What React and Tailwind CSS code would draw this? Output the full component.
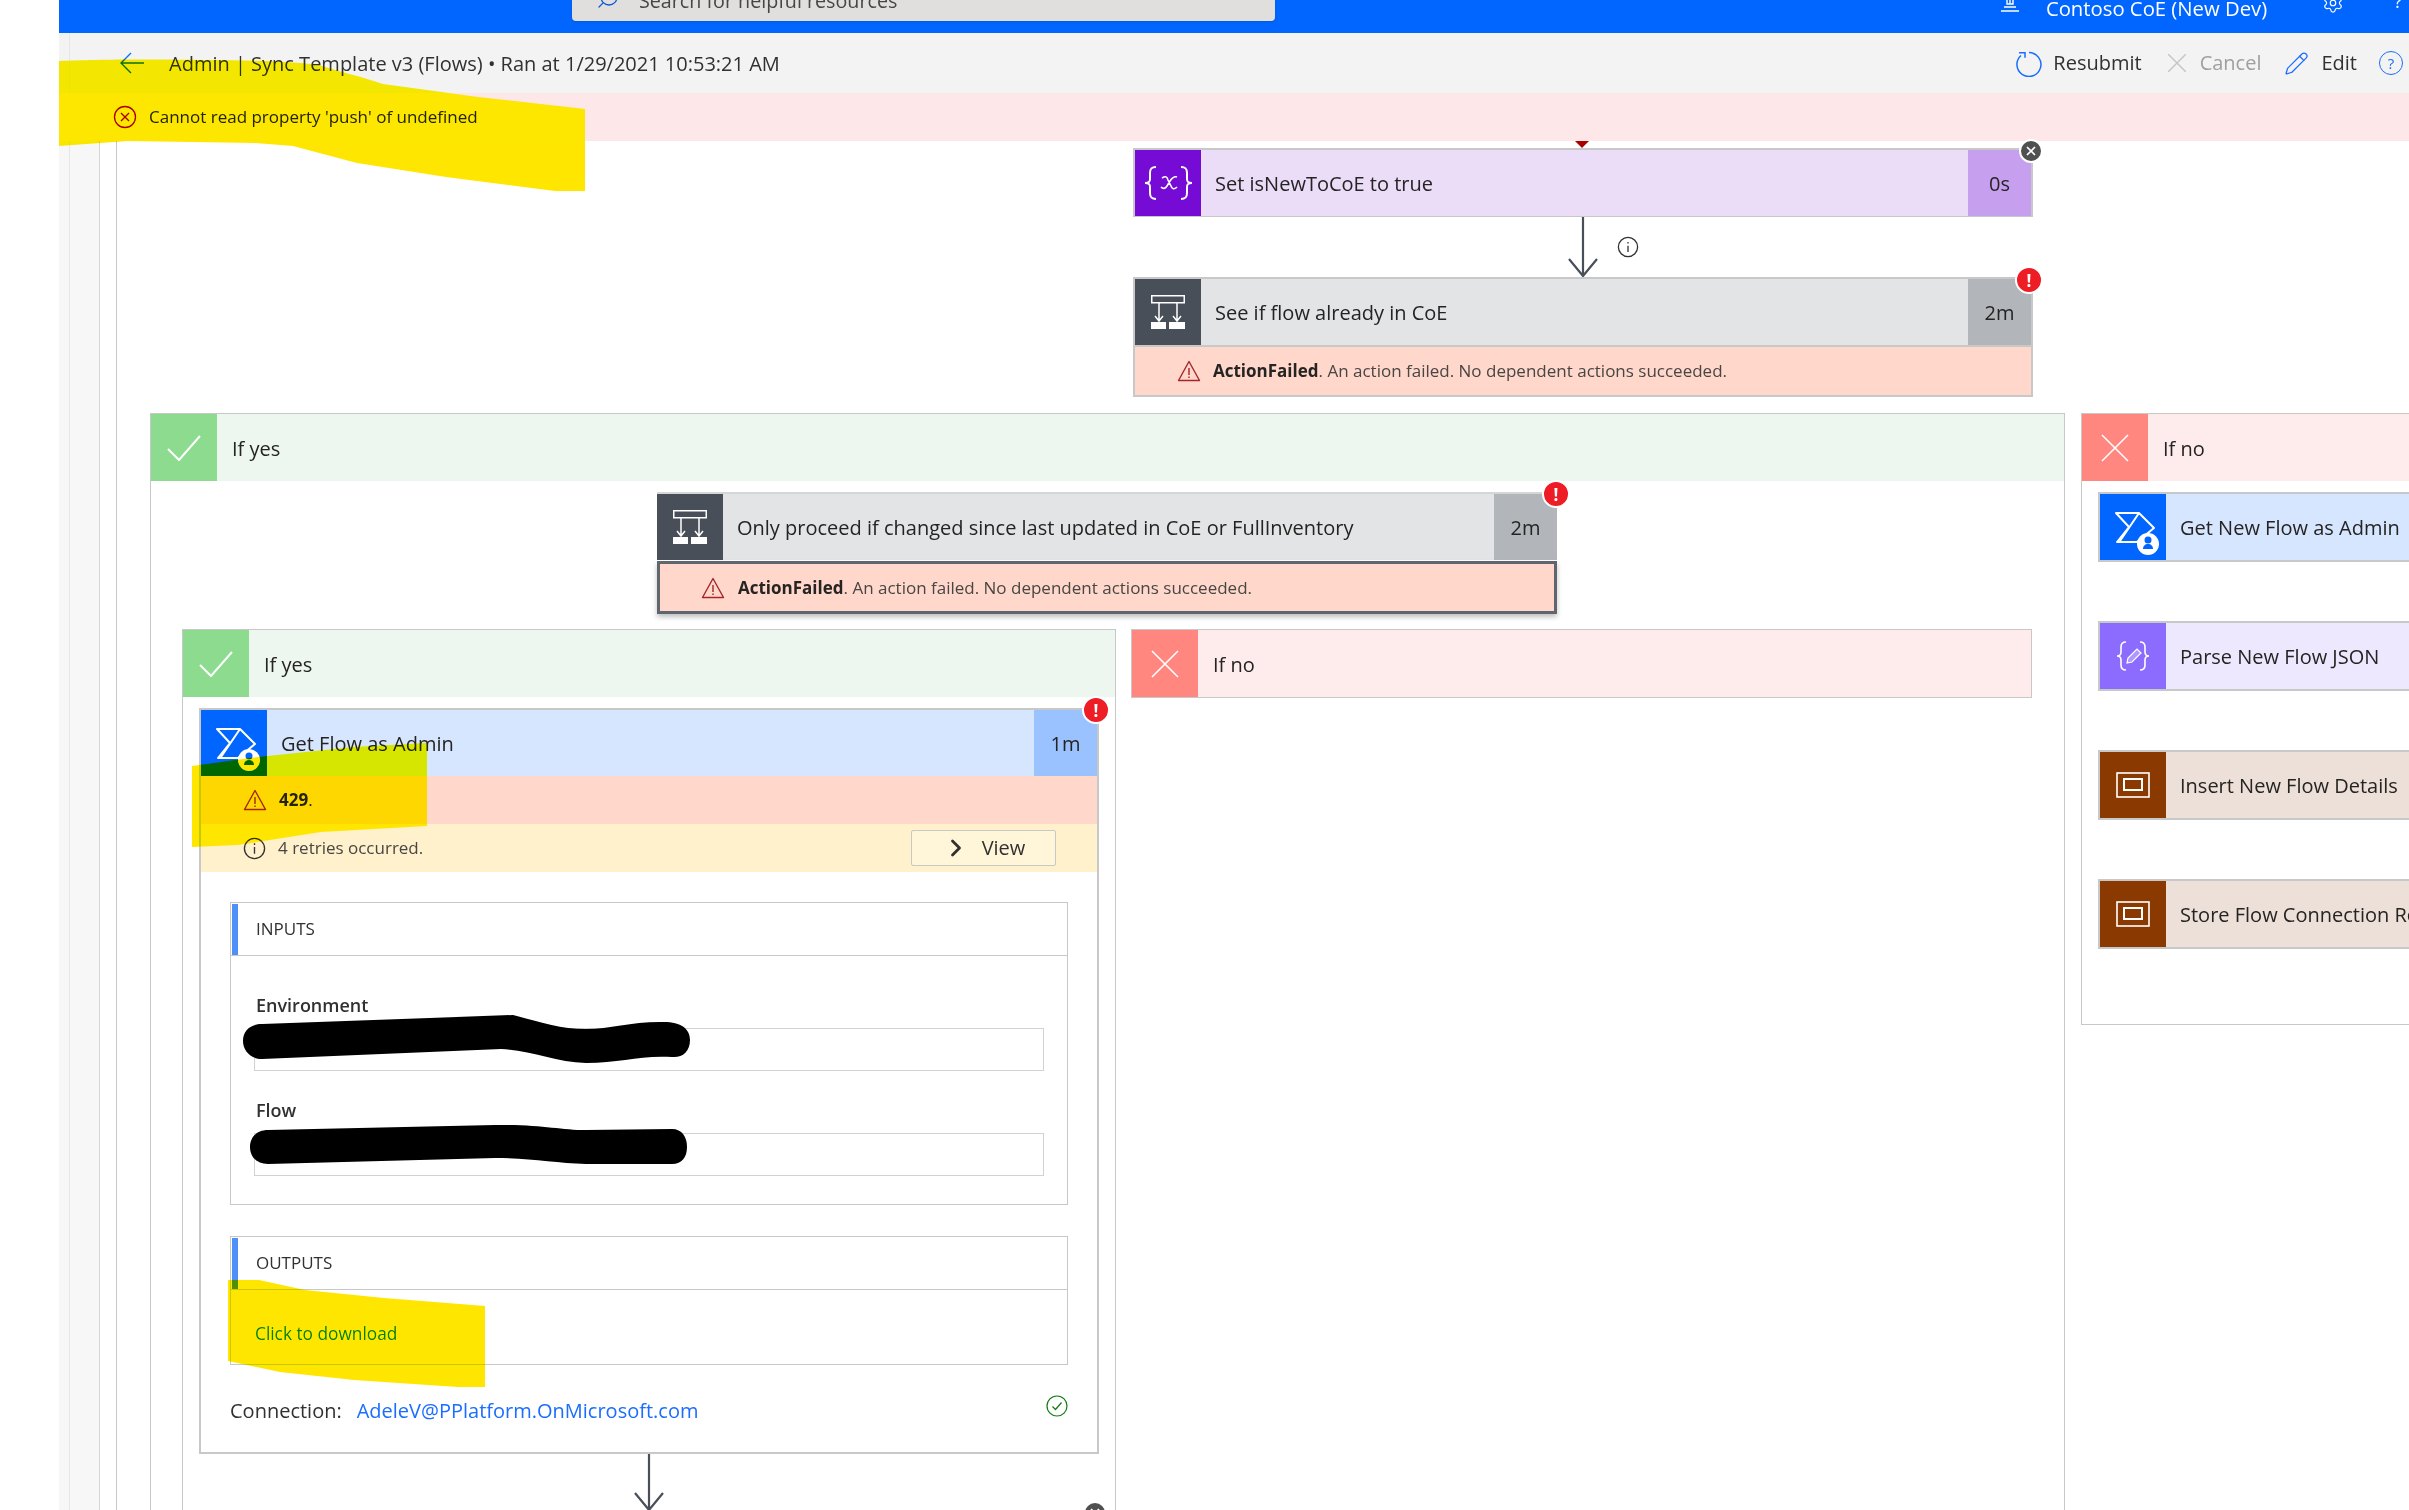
import React from "react";
import { ChevronRight, X, Pencil, Settings, Search } from "lucide-react";

// flow step icons, drawn in the 66px icon cell or smaller
function ScopeIcon() {
  return (
    <svg width="34" height="34" viewBox="0 0 34 34" fill="none" stroke="white" strokeWidth="1.5">
      <rect x="0.75" y="0.75" width="32.5" height="7" />
      <path d="M8 8v18M4 21l4 5 4-5M26 8v18M22 21l4 5 4-5" />
      <rect x="0" y="27" width="15" height="7" fill="white" stroke="none" />
      <rect x="18" y="27" width="16" height="7" fill="white" stroke="none" />
    </svg>
  );
}

function VariableIcon() {
  return (
    <svg width="66" height="66" viewBox="0 0 66 66" fill="none" stroke="white" strokeWidth="2">
      <path d="M21 17c-5 0-6 2-6 6v6c0 3-1 4-5 4c4 0 5 1 5 4v6c0 4 1 6 6 6M46 17c5 0 6 2 6 6v6c0 3 1 4 5 4c-4 0-5 1-5 4v6c0 4-1 6-6 6" />
      <path d="M27 28c3-2 5-2 6 2l3 6c1 3 3 4 6 1M42 27c-3-1-5 1-7 4l-3 5c-2 3-4 3-6 1" strokeWidth="1.6" />
    </svg>
  );
}

function AdminIcon() {
  return (
    <svg width="66" height="66" viewBox="0 0 66 66" fill="none">
      <path d="M16 19H39L54 34L37 48H17L29 33ZM39 19L20 47" stroke="white" strokeWidth="2" strokeLinejoin="round" />
      <circle cx="48" cy="50" r="11" fill="white" />
      <circle cx="48" cy="46" r="3.5" fill="#0066ff" />
      <path d="M43 55c0-3 2-5 5-5s5 2 5 5z" fill="#0066ff" />
    </svg>
  );
}

function ParseIcon() {
  return (
    <svg width="66" height="66" viewBox="0 0 66 66" fill="none" stroke="white" strokeWidth="1.6">
      <path d="M26 19c-4 0-5 2-5 5v5c0 3-1 4-4 4c3 0 4 1 4 4v5c0 3 1 5 5 5M40 19c4 0 5 2 5 5v5c0 3 1 4 4 4c-3 0-4 1-4 4v5c0 3-1 5-5 5" />
      <path d="M27 40l1-5 9-9 4 4-9 9z" strokeWidth="1.2" fill="white" fillOpacity="0.3" />
    </svg>
  );
}

function TableIcon() {
  return (
    <svg width="34" height="26" viewBox="0 0 34 26" fill="none" stroke="white" strokeWidth="1.6">
      <rect x="1" y="1" width="32" height="24" />
      <rect x="8" y="7" width="18" height="11" strokeWidth="2" />
    </svg>
  );
}

function WarnIcon() {
  return (
    <svg width="24" height="22" viewBox="0 0 24 22" fill="none" stroke="#a4262c" strokeWidth="1.4">
      <path d="M12 1.5L1.5 20.5h21z" strokeLinejoin="round" />
      <path d="M12 8v7M12 16.5v1.6" />
    </svg>
  );
}

function InfoIcon({ size = 23, color = "#323130" }) {
  return (
    <svg width={size} height={size} viewBox="0 0 24 24" fill="none" stroke={color} strokeWidth="1.4">
      <circle cx="12" cy="12" r="10.5" />
      <path d="M12 10.5v7M12 6.5v1.8" />
    </svg>
  );
}

function ErrorBadge({ className = "-right-[10px] -top-[11px]" }) {
  return (
    <div className={`absolute z-10 flex h-[28px] w-[28px] items-center justify-center rounded-full border-2 border-white bg-[#ee1c25] text-[17px] font-bold leading-none text-white ${className}`}>
      !
    </div>
  );
}

function CloseBadge({ className }) {
  return (
    <div className={`absolute z-10 flex h-[24px] w-[24px] items-center justify-center rounded-full border-2 border-white bg-[#505050] ${className}`}>
      <X size={14} color="white" strokeWidth={3} />
    </div>
  );
}

function Connector({ height = 60, info = false }) {
  return (
    <div className="relative flex justify-center" style={{ height }}>
      <svg width="32" height={height} viewBox={`0 0 32 ${height}`} fill="none" stroke="#484f58" strokeWidth="2.2">
        <path d={`M16 0V${height - 1}M2 ${height - 18}L16 ${height - 1}L30 ${height - 18}`} />
      </svg>
      {info && (
        <div className="absolute left-[484px] top-[19px]">
          <InfoIcon size={22} />
        </div>
      )}
    </div>
  );
}

// one action in the run view: coloured icon, title, duration
function Step({ icon, iconBg, bg, durBg, title, time, className = "w-[900px] border-2 border-b-0 border-[#c8c8c8]" }) {
  return (
    <div className={`flex h-[68px] ${className}`} style={{ background: bg }}>
      <div className="flex w-[66px] shrink-0 items-center justify-center" style={{ background: iconBg }}>
        {icon}
      </div>
      <div className="min-w-0 flex-1 truncate pl-[14px] text-[20px] leading-[68px] text-[#252423]">{title}</div>
      {time && (
        <div className="w-[63px] shrink-0 text-center text-[20px] leading-[68px] text-[#252423]" style={{ background: durBg }}>
          {time}
        </div>
      )}
    </div>
  );
}

function FailRow({ label, rest, className = "" }) {
  return (
    <div className={`flex h-[52px] items-center bg-[#ffd7cb] text-[17px] text-[#484644] ${className}`}>
      <WarnIcon />
      <div className="whitespace-nowrap">
        <span className="font-bold text-[#252423]">{label}</span>
        {rest}
      </div>
    </div>
  );
}

function BranchHeader({ yes, title }) {
  return (
    <div className={`flex h-[67px] items-center ${yes ? "bg-[#edf7ef]" : "bg-[#feecec]"}`}>
      <div className={`flex h-full w-[66px] shrink-0 items-center justify-center ${yes ? "bg-[#8cdb8f]" : "bg-[#ff8780]"}`}>
        {yes ? (
          <svg width="34" height="26" viewBox="0 0 34 26" fill="none" stroke="white" strokeWidth="2">
            <path d="M1 14L12 25L33 1" />
          </svg>
        ) : (
          <svg width="28" height="28" viewBox="0 0 28 28" fill="none" stroke="white" strokeWidth="1.6">
            <path d="M1 1L27 27M27 1L1 27" />
          </svg>
        )}
      </div>
      <span className="pl-[15px] pt-[2px] text-[20px] text-[#252423]">{title}</span>
    </div>
  );
}

function ParamBox({ title, className = "", children }) {
  return (
    <div className={`border border-[#c8c8c8] ${className}`}>
      <div className="relative flex h-[53px] items-center border-b border-[#c8c8c8] pl-[25px] text-[17px] text-[#323130]">
        <div className="absolute bottom-0 left-[1px] top-[1px] w-[6px] bg-[#4f8ffa]" />
        {title}
      </div>
      {children}
    </div>
  );
}

function Field({ label }) {
  return (
    <div>
      <div className="h-[32px] pl-[2px] text-[18px] font-semibold leading-[19px] text-[#323130]">{label}</div>
      <div className="h-[43px] border border-[#d2d2d2]" />
    </div>
  );
}

export default function App() {
  return (
    <div className="relative flex h-[1510px] w-[2409px] overflow-hidden bg-white font-['Open_Sans',sans-serif]">
      <div className="w-[59px] shrink-0" />
      <div className="flex min-w-0 flex-1 flex-col">
        {/* top bar */}
        <div className="flex h-[33px] shrink-0 items-start overflow-hidden bg-[#0066ff]">
          <div className="ml-[513px] flex h-[21px] w-[703px] items-start gap-[19px] rounded-b-[4px] bg-[#e1dfdd] pl-[24px] shadow-sm">
            <Search size={24} color="#0f5ad2" strokeWidth={1.3} className="-mt-[14px] -scale-x-100" />
            <span className="-mt-[11px] text-[19.7px] leading-[24px] text-[#484644]">Search for helpful resources</span>
          </div>
          <div className="ml-auto flex h-[21px] items-center text-white">
            <svg width="24" height="18" viewBox="0 0 24 18" fill="none" stroke="white" strokeWidth="1.4" className="-mt-[14px]">
              <path d="M3 16h18M6 12h12M12 0v9M9 5v4h6V5" />
            </svg>
            <span className="ml-[24px] -mt-[5px] text-[20.3px] leading-[20px]">Contoso CoE (New Dev)</span>
            <Settings size={22} strokeWidth={1.3} className="-mt-[16px] ml-[55px]" />
            <span className="ml-[50px] mr-[7px] -mt-[18px] text-[18px]">?</span>
          </div>
        </div>

        {/* toolbar */}
        <div className="flex h-[60px] shrink-0 items-center bg-[#f3f3f3] pr-[6px] text-[20px] text-[#323130]">
          <div className="h-full w-[11px] shrink-0 border-r border-[#e6e6e6]" />
          <svg width="25" height="22" viewBox="0 0 25 22" fill="none" stroke="#0f6cff" strokeWidth="1.4" className="ml-[49px] mr-[25px]">
            <path d="M2 11H25M12 1L2 11L12 21" />
          </svg>
          <span className="whitespace-nowrap pt-[1px]">Admin | Sync Template v3 (Flows) • Ran at 1/29/2021 10:53:21 AM</span>
          <div className="ml-auto flex items-center">
            <svg width="27" height="27" viewBox="0 0 27 27" fill="none" stroke="#1b6dff" strokeWidth="1.5" className="mr-[10px]">
              <path d="M13 2.5A12 12 0 1 1 5 5.5M3 2.7H9V7.7" />
            </svg>
            <span>Resubmit</span>
            <svg width="18" height="18" viewBox="0 0 18 18" fill="none" stroke="#c8c6c4" strokeWidth="1.5" className="ml-[26px] mr-[14px]">
              <path d="M0 0L18 18M18 0L0 18" />
            </svg>
            <span className="text-[#a19f9d]">Cancel</span>
            <Pencil size={25} color="#1b6dff" strokeWidth={1.2} className="ml-[23px] mr-[12px]" />
            <span>Edit</span>
            <div className="ml-[22px] flex h-[24px] w-[24px] items-center justify-center rounded-full border border-[#1b6dff] text-[15px] text-[#1b6dff]">?</div>
          </div>
        </div>

        {/* error banner */}
        <div className="flex h-[48px] shrink-0 items-center gap-[12px] bg-[#fde7e9] pl-[54px] text-[17px] text-[#252423]">
          <svg width="24" height="24" viewBox="0 0 24 24" fill="none" stroke="#a80000" strokeWidth="1.3">
            <circle cx="12" cy="12" r="10.5" />
            <path d="M8 8l8 8M16 8l-8 8" />
          </svg>
          Cannot read property 'push' of undefined
        </div>

        {/* canvas */}
        <div className="flex min-h-0 flex-1">
          <div className="h-full w-[11px] shrink-0 border-r border-[#e6e6e6] bg-[#f7f7f7]" />
          <div className="h-full w-[30px] shrink-0 border-r border-[#d5d5d5] bg-[#f7f7f7]" />
          <div className="h-full w-[17px] shrink-0 border-r border-[#c8c8c8]" />

          <div className="relative min-w-0 flex-1">
            <div className="ml-[1016px] w-[900px] pt-[7px]">
              <div className="relative">
                <svg width="14" height="7" viewBox="0 0 14 7" className="absolute -top-[7px] left-[442px]">
                  <path d="M0 0h14L7 7z" fill="#a80000" />
                </svg>
                <Step
                  icon={<VariableIcon />}
                  iconBg="#770bd6"
                  bg="#ebdcf8"
                  durBg="#c69fee"
                  title="Set isNewToCoE to true"
                  time="0s"
                />
                <div className="h-[1px] bg-[#c8c8c8]" />
                <CloseBadge className="-right-[10px] -top-[9px]" />
              </div>
              <Connector info />
              <div className="relative">
                <Step icon={<ScopeIcon />} iconBg="#484f58" bg="#e3e4e6" durBg="#b2b6ba" title="See if flow already in CoE" time="2m" />
                <FailRow
                  label="ActionFailed"
                  rest=". An action failed. No dependent actions succeeded."
                  className="gap-[12px] border-2 border-[#c8c8c8] pl-[42px]"
                />
                <ErrorBadge />
              </div>
            </div>

            {/* branches of the first condition */}
            <div className="ml-[33px] mt-[16px] flex w-[2400px] items-start gap-[16px]">
              <div className="h-[1200px] w-[1915px] shrink-0 border-x border-t border-[#c8c8c8]">
                <BranchHeader yes title="If yes" />
                <div className="ml-[506px] mt-[11px] w-[900px]">
                  <div className="relative">
                    <Step icon={<ScopeIcon />} iconBg="#484f58" bg="#e3e4e6" durBg="#b2b6ba" title="Only proceed if changed since last updated in CoE or FullInventory" time="2m" className="w-[900px] border-t-2 border-[#d6d6d6]" />
                    <FailRow
                      label="ActionFailed"
                      rest=". An action failed. No dependent actions succeeded."
                      className="mt-[1px] h-[53px] gap-[13px] border-[3px] border-[#5f666e] pl-[41px] shadow-[0_3px_5px_rgba(0,0,0,0.25)]"
                    />
                    <ErrorBadge className="-right-[13px] -top-[12px]" />
                  </div>
                </div>

                <div className="ml-[31px] mt-[15px] flex items-start gap-[15px]">
                  <div className="h-[900px] w-[934px] shrink-0 border-x border-t border-[#c8c8c8]">
                    <BranchHeader yes title="If yes" />
                    <div className="ml-[16px] mt-[11px] w-[900px]">
                      <div className="relative">
                        <Step icon={<AdminIcon />} iconBg="#0066ff" bg="#d6e6ff" durBg="#99c2ff" title="Get Flow as Admin" time="1m" />
                        <ErrorBadge className="-right-[11px] -top-[12px]" />
                        <div className="border-x-2 border-b-2 border-[#c8c8c8]">
                          <div className="flex h-[48px] items-center gap-[12px] bg-[#ffd7cb] pl-[42px] text-[17px] text-[#252423]">
                            <WarnIcon />
                            <span><b>429</b>.</span>
                          </div>
                          <div className="flex h-[48px] items-center gap-[12px] bg-[#fff1cc] pl-[42px] pr-[41px] text-[17px] text-[#484644]">
                            <InfoIcon />
                            <span>4 retries occurred.</span>
                            <div className="ml-auto flex h-[36px] w-[145px] items-center justify-center gap-[12px] rounded-[2px] border border-[#c8c8c8] bg-[#fff5d8] text-[20px] text-[#323130]">
                              <ChevronRight size={28} strokeWidth={2.4} />
                              View
                            </div>
                          </div>
                          <div className="px-[29px] pb-[26px] pt-[30px]">
                            <ParamBox title="INPUTS" className="h-[303px]">
                              <div className="flex flex-col gap-[30px] px-[23px] pt-[40px]">
                                <Field label="Environment" />
                                <Field label="Flow" />
                              </div>
                            </ParamBox>
                            <ParamBox title="OUTPUTS" className="mt-[31px] h-[129px]">
                              <div className="pl-[24px] pt-[31px] text-[17.3px] text-[#0e7a0d]">Click to download</div>
                            </ParamBox>
                            <div className="mt-[31px] flex items-center text-[20px] text-[#323130]">
                              <span>Connection:</span>
                              <span className="ml-[15px] text-[#1b6dff]">AdeleV@PPlatform.OnMicrosoft.com</span>
                              <svg width="22" height="22" viewBox="0 0 22 22" fill="none" stroke="#107c10" strokeWidth="1.2" className="ml-auto -mt-[10px]">
                                <circle cx="11" cy="11" r="10" />
                                <path d="M6.5 11.5l3 3 6-7" />
                              </svg>
                            </div>
                          </div>
                        </div>
                      </div>
                      <Connector height={57} />
                      <div className="relative h-[10px]">
                        <CloseBadge className="-right-[8px] -top-[10px]" />
                      </div>
                    </div>
                  </div>
                  <div className="w-[901px] shrink-0 border border-[#c8c8c8]">
                    <BranchHeader title="If no" />
                  </div>
                </div>
              </div>

              {/* first condition, no branch */}
              <div className="h-[612px] w-[500px] shrink-0 border border-[#c8c8c8]">
                <BranchHeader title="If no" />
                <div className="ml-[16px] mt-[11px] flex flex-col gap-[59px]">
                  <div>
                    <Step icon={<AdminIcon />} iconBg="#0066ff" bg="#d6e6ff" title="Get New Flow as Admin" className="w-[480px] border-2 border-b-0 border-[#c8c8c8]" />
                    <div className="h-[2px] bg-[#c8c8c8]" />
                  </div>
                  <div>
                    <Step icon={<ParseIcon />} iconBg="#8c6cff" bg="#eee8ff" title="Parse New Flow JSON" className="w-[480px] border-2 border-b-0 border-[#c8c8c8]" />
                    <div className="h-[2px] bg-[#c8c8c8]" />
                  </div>
                  <div>
                    <Step icon={<TableIcon />} iconBg="#8a3900" bg="#ede0d8" title="Insert New Flow Details" className="w-[480px] border-2 border-b-0 border-[#c8c8c8]" />
                    <div className="h-[2px] bg-[#c8c8c8]" />
                  </div>
                  <div>
                    <Step icon={<TableIcon />} iconBg="#8a3900" bg="#ede0d8" title="Store Flow Connection Record" className="w-[480px] border-2 border-b-0 border-[#c8c8c8]" />
                    <div className="h-[2px] bg-[#c8c8c8]" />
                  </div>
                </div>
              </div>
            </div>
          </div>
        </div>
      </div>

      {/* marker and redaction scribbles drawn over the screenshot */}
      <svg className="pointer-events-none absolute left-0 top-0 z-20 mix-blend-darken" width="2409" height="1510" viewBox="0 0 2409 1510">
        <path fill="#ffe600" d="M59 61C90 60 128 59 200 60C260 60 300 62 319 65C340 72 360 76 383 84L478 97L585 109V191H555L446 177L357 163L293 146L255 143L128 141L59 146Z" />
        <path fill="#ffe600" d="M192 766L258 757L353 747L427 743V826L321 832L238 845L192 847Z" />
        <path fill="#ffe600" d="M228 1280H259L305 1290L384 1298L485 1306V1387H458L354 1380L280 1372L228 1361Z" />
      </svg>
      <svg className="pointer-events-none absolute left-0 top-0 z-20" width="2409" height="1510" viewBox="0 0 2409 1510">
        <path fill="black" d="M262 1024L513 1015C540 1022 560 1029 586 1029C610 1029 630 1022 660 1022C680 1021 690 1028 690 1040C690 1052 682 1058 672 1057C640 1055 620 1063 586 1063C555 1062 530 1050 501 1049L262 1059C250 1059 243 1050 243 1041C243 1031 250 1024 262 1024Z" />
        <path fill="black" d="M268 1130L495 1125C540 1124 560 1130 586 1130L672 1129C682 1129 687 1137 687 1147C687 1157 682 1164 672 1164H586C555 1163 530 1158 495 1158L268 1164C257 1164 250 1157 250 1147C250 1137 257 1130 268 1130Z" />
      </svg>
    </div>
  );
}
